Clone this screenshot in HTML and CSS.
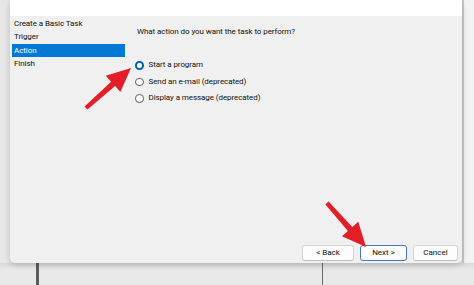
FILE: index.html
```html
<!DOCTYPE html>
<html lang="en">
<head>
    <meta charset="UTF-8">
    <meta name="viewport" content="width=device-width, initial-scale=1.0">
    <title>Create Basic Task Wizard</title>
    <link rel="stylesheet" href="styles.css">
</head>
<body>
    <div class="desk">
        <div class="dialog">
            <div class="dialog-top"></div>
            <div class="dialog-body">
                <ul class="steps">
                    <li>Create a Basic Task</li>
                    <li>Trigger</li>
                    <li class="current">Action</li>
                    <li>Finish</li>
                </ul>
                <div class="main">
                    <p class="question">What action do you want the task to perform?</p>
                    <div class="choices">
                        <label class="choice"><span class="radio checked"></span>Start a program</label>
                        <label class="choice"><span class="radio"></span>Send an e-mail (deprecated)</label>
                        <label class="choice"><span class="radio"></span>Display a message (deprecated)</label>
                    </div>
                </div>
            </div>
            <div class="buttons">
                <button class="btn">&lt; Back</button>
                <button class="btn primary">Next &gt;</button>
                <button class="btn">Cancel</button>
            </div>
        </div>
        <div class="edge"></div>
    </div>
    <div class="under">
        <div class="bar thick"></div>
        <div class="bar thin"></div>
    </div>

    <svg class="arrows" width="474" height="285" viewBox="0 0 474 285">
        <polygon points="84.5,106.4 111.1,81.7 105.8,75.7 131,68 120.4,92.1 115.1,86.1 87.5,109.6"/>
        <polygon points="325.4,204.5 347.9,231 341.9,236.3 366,247 358.3,221.7 352.3,227 328.6,201.5"/>
    </svg>
</body>
</html>
```

FILE: styles.css
```css
*,
*::after,
*::before{
    padding: 0;
    margin: 0;
    box-sizing: border-box;
}
html{
    font: normal 8px/1.5 Roboto, "Noto Sans", sans-serif;
    letter-spacing: -0.08px;
    color: #111;
}
body{
    width: 474px;
    height: 285px;
    overflow: hidden;
    position: relative;
    background: #e7e7e7;
}
.desk{
    display: flex;
    height: 263px;
    padding-left: 10px;
}
.dialog{
    width: 452px;
    display: flex;
    flex-direction: column;
    background: #f0f0f0;
    border-radius: 0 0 5px 5px;
    box-shadow: 0 2px 6px rgba(0,0,0,0.18);
    position: relative;
    z-index: 1;
}
.dialog-top{
    height: 16px;
    background: #fff;
}
.dialog-body{
    flex: 1;
    display: grid;
    grid-template-columns: 115px 1fr;
}
.steps{
    list-style: none;
    padding: 0.5px 0 0 2px;
}
.steps li{
    height: 13.5px;
    line-height: 13.5px;
    padding-left: 2px;
}
.steps li.current{
    background: #0078d7;
    color: #fff;
}
.main{
    padding: 9px 0 0 12px;
}
.question{
    line-height: 14px;
}
.choices{
    display: flex;
    flex-direction: column;
    margin: 18px 0 0 -2px;
}
.choice{
    display: flex;
    align-items: center;
    height: 16.5px;
    gap: 5px;
}
.radio{
    width: 8.5px;
    height: 8.5px;
    border: 1px solid #5d5d5d;
    border-radius: 50%;
    background: #fff;
}
.radio.checked{
    border: 2.6px solid #0060b8;
}
.buttons{
    display: flex;
    justify-content: flex-end;
    gap: 6px;
    padding: 0 4px 2px 0;
}
.btn{
    font: inherit;
    width: 52px;
    height: 16px;
    color: #111;
    background: #fdfdfd;
    border: 1px solid #d4d4d4;
    border-bottom-color: #bdbdbd;
    border-radius: 3px;
}
.btn.primary{
    width: 47px;
    border-color: #3d7bc4;
}
.btn:last-child{
    width: 45px;
}
.edge{
    flex: 1;
    background: #f3f3f3;
    border-left: 2px solid #c9c9c9;
}
.under{
    display: flex;
    height: 22px;
    background: linear-gradient(#d8d8d8, #e9e9e9 6px);
}
.bar{
    height: 100%;
}
.bar.thick{
    width: 3px;
    margin-left: 36px;
    background: #5c5c5c;
}
.bar.thin{
    width: 1px;
    margin-left: 283px;
    background: #6a6a6a;
}
.arrows{
    position: absolute;
    left: 0;
    top: 0;
    z-index: 2;
    pointer-events: none;
    fill: #e41e26;
}
```
